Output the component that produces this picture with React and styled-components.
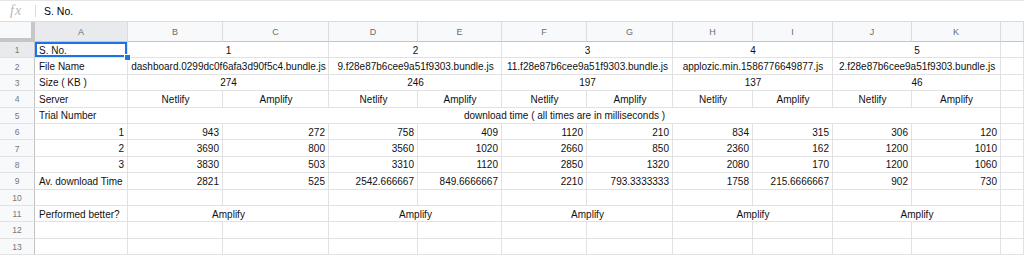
import React from "react"
import styled, { createGlobalStyle } from "styled-components"

const GlobalStyle = createGlobalStyle`
  html, body {
    margin: 0;
    padding: 0;
    background: #fff;
    overflow: hidden;
  }
  body {
    font-family: "Liberation Sans", Arial, sans-serif;
  }
`

const COLUMNS = [
  { name: "A", width: 93 },
  { name: "B", width: 95 },
  { name: "C", width: 106 },
  { name: "D", width: 89 },
  { name: "E", width: 84 },
  { name: "F", width: 85 },
  { name: "G", width: 86 },
  { name: "H", width: 80 },
  { name: "I", width: 80 },
  { name: "J", width: 79 },
  { name: "K", width: 89 },
  { name: "L", width: null },
]

const pair = (a, b) => [
  { text: a, align: "center" },
  { text: b, align: "center" },
]
const servers = [].concat(...[1, 2, 3, 4, 5].map(() => pair("Netlify", "Amplify")))
const merged = (values) => values.map((text) => ({ text, span: 2, align: "center" }))
const nums = (values) => values.map((text) => ({ text, align: "right" }))
const empty = (n) => Array.from({ length: n }, () => ({ text: "" }))

const ROWS = [
  [{ text: "S. No.", selected: true }, ...merged(["1", "2", "3", "4", "5"]), ...empty(1)],
  [
    { text: "File Name" },
    ...merged([
      "dashboard.0299dc0f6afa3d90f5c4.bundle.js",
      "9.f28e87b6cee9a51f9303.bundle.js",
      "11.f28e87b6cee9a51f9303.bundle.js",
      "applozic.min.1586776649877.js",
      "2.f28e87b6cee9a51f9303.bundle.js",
    ]),
    ...empty(1),
  ],
  [{ text: "Size ( KB )" }, ...merged(["274", "246", "197", "137", "46"]), ...empty(1)],
  [{ text: "Server" }, ...servers, ...empty(1)],
  [
    { text: "Trial Number" },
    { text: "download time ( all times are in milliseconds )", span: 10, align: "center" },
    ...empty(1),
  ],
  [...nums(["1", "943", "272", "758", "409", "1120", "210", "834", "315", "306", "120"]), ...empty(1)],
  [...nums(["2", "3690", "800", "3560", "1020", "2660", "850", "2360", "162", "1200", "1010"]), ...empty(1)],
  [...nums(["3", "3830", "503", "3310", "1120", "2850", "1320", "2080", "170", "1200", "1060"]), ...empty(1)],
  [
    { text: "Av. download Time" },
    ...nums([
      "2821",
      "525",
      "2542.666667",
      "849.6666667",
      "2210",
      "793.3333333",
      "1758",
      "215.6666667",
      "902",
      "730",
    ]),
    ...empty(1),
  ],
  empty(12),
  [{ text: "Performed better?" }, ...merged(["Amplify", "Amplify", "Amplify", "Amplify", "Amplify"]), ...empty(1)],
  empty(12),
  empty(12),
]

const Page = styled.div`
  width: 1024px;
  height: 257px;
  display: flex;
  flex-direction: column;
  overflow: hidden;
`

const FormulaBar = styled.div`
  height: 22px;
  box-sizing: border-box;
  display: flex;
  align-items: center;
  border-top: 1px solid #e6e6e6;
  border-bottom: 1px solid #dadce0;
`

const FxLabel = styled.div`
  width: 35px;
  box-sizing: border-box;
  padding-left: 10px;
  font-family: "Liberation Serif", "Times New Roman", serif;
  font-style: italic;
  font-size: 14px;
  color: #b9b9b9;
  letter-spacing: 1px;
`

const Divider = styled.div`
  width: 1px;
  height: 12px;
  background: #dadce0;
`

const FormulaText = styled.div`
  padding-left: 8px;
  font-size: 10.5px;
  color: #000;
`

const Sheet = styled.div`
  display: grid;
  grid-template-columns: 35px ${COLUMNS.map((c) => (c.width ? `${c.width}px` : "1fr")).join(" ")};
  grid-template-rows: 20px;
  grid-auto-rows: 16.4px;
`

const Corner = styled.div`
  box-sizing: border-box;
  background: #f8f9fa;
  border-right: 4px solid #c6c6c6;
  border-bottom: 4px solid #c6c6c6;
`

const ColHeader = styled.div`
  box-sizing: border-box;
  display: flex;
  align-items: center;
  justify-content: center;
  font-size: 9px;
  color: #6b6b6b;
  background: ${(p) => (p.active ? "#e8eaed" : "#f8f9fa")};
  border-right: 1px solid #dadce0;
  border-bottom: 1px solid #c4c4c4;
`

const RowHeader = styled.div`
  box-sizing: border-box;
  display: flex;
  align-items: center;
  justify-content: center;
  padding-top: 1px;
  font-size: 8.5px;
  color: #777;
  background: ${(p) => (p.active ? "#e8eaed" : "#f8f9fa")};
  border-right: 1px solid #c4c4c4;
  border-bottom: 1px solid #e2e2e2;
`

const Cell = styled.div`
  position: relative;
  box-sizing: border-box;
  grid-column: span ${(p) => p.span || 1};
  display: flex;
  align-items: center;
  justify-content: ${(p) =>
    p.align === "right" ? "flex-end" : p.align === "center" ? "center" : "flex-start"};
  padding: 1px 3px 0 4px;
  font-size: 10px;
  color: #111;
  white-space: nowrap;
  overflow: visible;
  border-right: 1px solid #e2e2e2;
  border-bottom: 1px solid #e2e2e2;
  box-shadow: ${(p) => (p.selected ? "inset 0 0 0 2px #1a73e8" : "none")};

  &::after {
    content: "";
    display: ${(p) => (p.selected ? "block" : "none")};
    position: absolute;
    right: -4px;
    bottom: -4px;
    width: 5px;
    height: 5px;
    background: #1a73e8;
    border: 1px solid #fff;
    z-index: 2;
  }
`

const App = () => (
  <Page>
    <GlobalStyle />
    <FormulaBar>
      <FxLabel>fx</FxLabel>
      <Divider />
      <FormulaText>S. No.</FormulaText>
    </FormulaBar>
    <Sheet>
      <Corner />
      {COLUMNS.map((c) => (
        <ColHeader key={c.name} active={c.name === "A"}>
          {c.name === "L" ? "" : c.name}
        </ColHeader>
      ))}
      {ROWS.map((row, r) => (
        <React.Fragment key={r}>
          <RowHeader active={r === 0}>{r + 1}</RowHeader>
          {row.map((cell, i) => (
            <Cell key={i} span={cell.span} align={cell.align} selected={cell.selected}>
              {cell.text}
            </Cell>
          ))}
        </React.Fragment>
      ))}
    </Sheet>
  </Page>
)

export default App
